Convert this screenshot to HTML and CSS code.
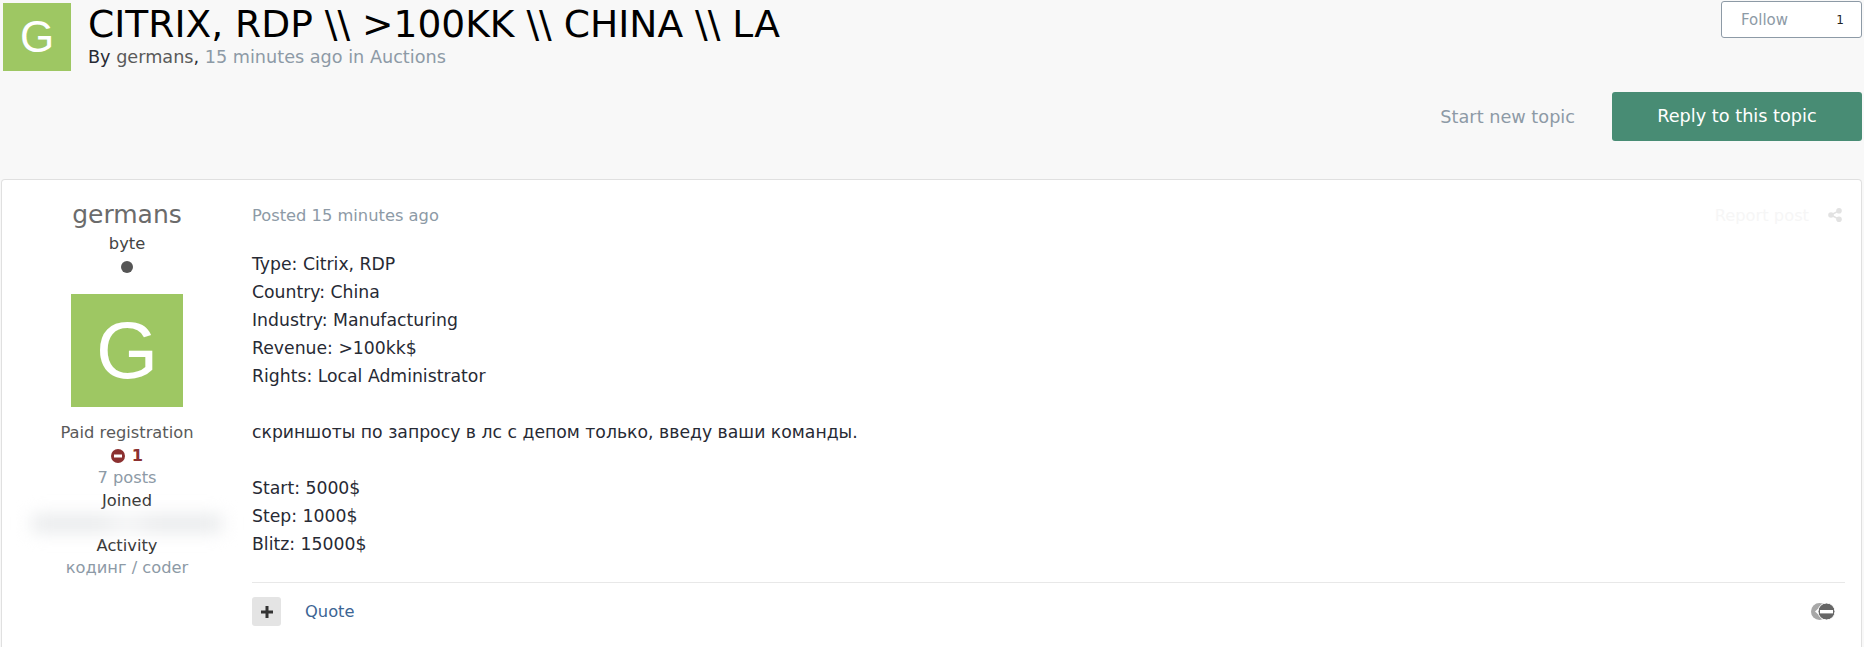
FILE: index.html
```html
<!DOCTYPE html>
<html lang="en">
<head>
    <meta charset="UTF-8">
    <title>CITRIX, RDP \\ &gt;100KK \\ CHINA \\ LA</title>
    <link rel="stylesheet" href="styles.css">
</head>
<body>
    <div class="topic-header">
        <div class="topic-avatar">G</div>
        <div class="topic-info">
            <h1>CITRIX, RDP \\ &gt;100KK \\ CHINA \\ LA</h1>
            <p>By <a class="author" href="#">germans</a>, <span class="muted">15 minutes ago in Auctions</span></p>
        </div>
        <div class="follow-box">
            <span class="follow-text">Follow</span>
            <span class="follow-count">1</span>
        </div>
    </div>

    <div class="topic-actions">
        <a class="new-topic" href="#">Start new topic</a>
        <a class="reply-button" href="#">Reply to this topic</a>
    </div>

    <div class="post">
        <div class="col-author">
            <div class="author-name">germans</div>
            <div class="author-rank">byte</div>
            <div class="status-dot"></div>
            <div class="author-avatar">G</div>
            <div class="author-group">Paid registration</div>
            <div class="author-rep">
                <svg class="rep-icon" viewBox="0 0 14 14"><circle cx="7" cy="7" r="7" fill="#8b3030"/><rect x="3" y="5.5" width="8" height="3" fill="#fff"/></svg>
                <span>1</span>
            </div>
            <div class="muted">7 posts</div>
            <div class="author-label">Joined</div>
            <div class="blur-wrap"><div class="blurred-date"></div></div>
            <div class="author-label">Activity</div>
            <div class="muted">кодинг / coder</div>
        </div>

        <div class="col-content">
            <div class="post-meta">
                <span class="post-date">Posted 15 minutes ago</span>
                <div class="post-tools">
                    <span class="report-link">Report post</span>
                    <svg class="share-icon" viewBox="0 0 14 14" fill="#e2e2e2"><circle cx="11" cy="2.8" r="2.8"/><circle cx="11" cy="11.2" r="2.8"/><circle cx="3" cy="7" r="2.8"/><path d="M3 6 11 2v1.6L3 8zM3 6l8 4.400V12L3 8z"/></svg>
                </div>
            </div>

            <div class="post-body">
                <p>Type: Citrix, RDP<br>Country: China<br>Industry: Manufacturing<br>Revenue: &gt;100kk$<br>Rights: Local Administrator</p>
                <p>скриншоты по запросу в лс с депом только, введу ваши команды.</p>
                <p>Start: 5000$<br>Step: 1000$<br>Blitz: 15000$</p>
            </div>

            <div class="post-footer">
                <div class="plus-button">
                    <svg viewBox="0 0 12 12" fill="#333"><path d="M4.500 0h3v4.500H12v3H7.500V12h-3V7.500H0v-3h4.500z"/></svg>
                </div>
                <a class="quote-link" href="#">Quote</a>
                <svg class="vote-icon" viewBox="0 0 24 17">
                    <circle cx="8.500" cy="8.500" r="8.500" fill="#a8a8a8"/>
                    <path d="M9 4 4 8.500 9 13z" fill="#fff"/>
                    <circle cx="15.500" cy="8.500" r="8.500" fill="#666" stroke="#fff" stroke-width="1"/>
                    <rect x="9" y="7" width="13" height="3.400" fill="#fff"/>
                </svg>
            </div>
        </div>
    </div>
</body>
</html>
```

FILE: styles.css
```css
html, body {
    height: 100%;
}

body {
    margin: 0;
    padding: 0;
    background-color: #f8f8f8;
    color: #272a34;
    font-family: 'DejaVu Sans', Verdana, sans-serif;
    font-size: 16.3px;
    overflow: hidden;
}

a {
    text-decoration: none;
}

.muted {
    color: #8d9aa6;
}

/* top of the page */
.topic-header {
    display: flex;
    padding: 3px 2px 0 3px;
    height: 51px;
}

.topic-avatar {
    width: 68px;
    height: 68px;
    flex: none;
    background: #9ec763;
    color: #fff;
    font-family: 'Liberation Sans', Arial, sans-serif;
    font-size: 44px;
    line-height: 68px;
    text-align: center;
}

.topic-info {
    flex: 1;
    margin-left: 17px;
}

.topic-info h1 {
    margin: 0;
    font-size: 37.6px;
    font-weight: normal;
    line-height: 42px;
    color: #000;
}

.topic-info p {
    margin: 1px 0 0;
    font-size: 17.65px;
    line-height: 22px;
}

.author {
    color: #5a5a5a;
}

.follow-box {
    display: flex;
    justify-content: space-between;
    align-items: center;
    box-sizing: border-box;
    width: 141px;
    height: 37px;
    margin-top: -2px;
    padding: 0 17px 0 19px;
    background: #fff;
    border: 1px solid #8d9aa6;
    border-radius: 3px;
}

.follow-text {
    color: #8d9aa6;
    font-size: 15px;
}

.follow-count {
    font-size: 12px;
    color: #222;
}

.topic-actions {
    display: flex;
    justify-content: flex-end;
    align-items: center;
    height: 49px;
    margin-top: 38px;
    padding-right: 2px;
}

.new-topic {
    color: #8d9aa6;
    font-size: 17.7px;
    margin-right: 37px;
}

.reply-button {
    display: block;
    width: 250px;
    height: 49px;
    line-height: 49px;
    text-align: center;
    background: #488c74;
    color: #fff;
    font-size: 17.7px;
    border-radius: 3px;
}

/* the post card */
.post {
    display: flex;
    box-sizing: border-box;
    height: 468px;
    margin: 38px 2px 0 1px;
    background: #fff;
    border: 1px solid #e0e0e0;
    border-bottom: none;
    border-radius: 4px 4px 0 0;
}

.col-author {
    flex: none;
    width: 250px;
    text-align: center;
    line-height: 22.500px;
    padding-top: 17px;
    color: #5a5a5a;
}

.author-name {
    font-size: 25px;
    line-height: 36px;
    color: #6b6b6b;
}

.author-rank {
    margin-top: -1px;
    color: #444;
    line-height: 24px;
}

.status-dot {
    width: 12px;
    height: 12px;
    margin: 5px auto 0;
    border-radius: 50%;
    background: #555;
}

.author-avatar {
    width: 112px;
    height: 113px;
    margin: 21px auto 15px;
    background: #9ec763;
    color: #fff;
    font-family: 'Liberation Sans', Arial, sans-serif;
    font-size: 80px;
    line-height: 113px;
}

.author-rep {
    display: flex;
    justify-content: center;
    align-items: center;
    gap: 7px;
    color: #8b3030;
    font-weight: bold;
}

.rep-icon {
    width: 14px;
    height: 14px;
}

.author-label {
    color: #333;
}

.blur-wrap {
    box-sizing: border-box;
    height: 22.500px;
    padding-top: 4px;
}

.blurred-date {
    width: 190px;
    height: 15px;
    margin: 0 auto;
    background: linear-gradient(90deg, #e4e6e8 0 35%, #f2f3f4 50%, #e4e6e8 65% 100%);
    filter: blur(9px);
}

.col-content {
    flex: 1;
    padding: 0 16px 0 0;
}

.post-meta {
    display: flex;
    justify-content: space-between;
    align-items: center;
    height: 22px;
    margin-top: 24px;
}

.post-date {
    color: #8d9aa6;
}

.post-tools {
    display: flex;
    align-items: center;
    gap: 19px;
    padding-right: 3px;
}

.report-link {
    color: #f6f6f6;
}

.share-icon {
    width: 14px;
    height: 14px;
}

.post-body {
    margin-top: 24px;
    font-size: 17.25px;
    line-height: 28px;
    color: #272a34;
}

.post-body p {
    margin: 0 0 28px;
}

.post-body p:last-child {
    margin-bottom: 24px;
}

.post-footer {
    display: flex;
    align-items: center;
    border-top: 1px solid #e8e8e8;
    padding-top: 14px;
}

.plus-button {
    display: flex;
    justify-content: center;
    align-items: center;
    width: 29px;
    height: 29px;
    background: #e4e4e4;
    border-radius: 3px;
}

.plus-button svg {
    width: 12px;
    height: 12px;
}

.quote-link {
    margin-left: 24px;
    color: #3d6594;
}

.vote-icon {
    width: 24px;
    height: 17px;
    margin-left: auto;
    margin-right: 10px;
}
```
